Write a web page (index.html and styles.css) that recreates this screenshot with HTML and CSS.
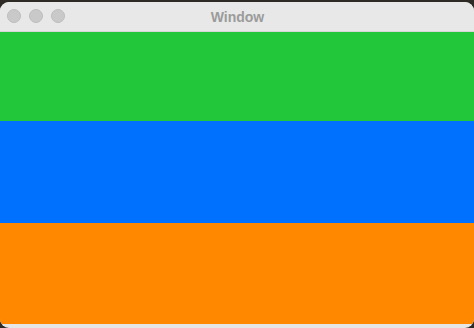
FILE: index.html
```html
<!DOCTYPE html>
<html lang="en">
<head>
    <meta charset="UTF-8">
    <meta name="viewport" content="width=device-width, initial-scale=1.0">
    <title>Window</title>
    <link rel="stylesheet" href="styles.css">
</head>
<body>
    <div class="window">
        <div class="titlebar">
            <div class="lights">
                <span class="light"></span>
                <span class="light"></span>
                <span class="light"></span>
            </div>
            <div class="title">Window</div>
        </div>
        <div class="band green"></div>
        <div class="band blue"></div>
        <div class="band orange"></div>
    </div>
</body>
</html>
```
FILE: styles.css
```css
html, body {
    margin: 0;
    height: 100%;
}
body {
    background: #2e2a26;
    font-family: "Liberation Sans", Arial, sans-serif;
    overflow: hidden;
}
.window {
    margin-top: 2px;
    height: 326px;
    display: flex;
    flex-direction: column;
    background: #e6e6e6;
    border-radius: 9px;
    overflow: hidden;
    padding-bottom: 4px;
    box-sizing: border-box;
}
.titlebar {
    position: relative;
    height: 30px;
    flex: none;
    display: flex;
    align-items: center;
    justify-content: center;
    background: #e8e8e8;
    border-bottom: 1px solid #d6d6d6;
    box-sizing: border-box;
}
.lights {
    position: absolute;
    left: 7px;
    top: 7px;
    display: flex;
    gap: 8px;
}
.light {
    width: 14px;
    height: 14px;
    border-radius: 50%;
    background: #c9c9c9;
    border: 1px solid #bdbdbd;
    box-sizing: border-box;
}
.title {
    font-size: 14px;
    font-weight: bold;
    color: #9b9b9b;
    padding-left: 1px;
}
.band {
    flex: none;
}
.green {
    height: 89px;
    background: #22c83a;
}
.blue {
    height: 102px;
    background: #0070ff;
}
.orange {
    flex: 1;
    background: #ff8800;
}
```
